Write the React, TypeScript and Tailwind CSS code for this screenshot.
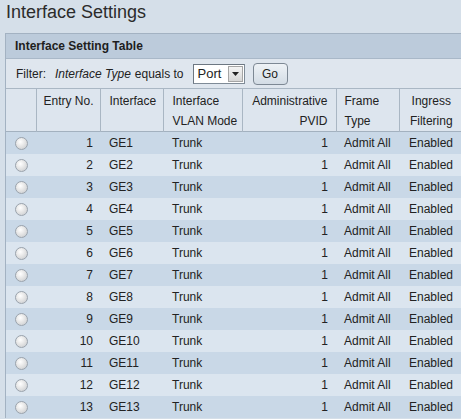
import React from "react";

const rows = Array.from({ length: 13 }, (_, i) => i + 1);

function Radio() {
  return (
    <span className="inline-block w-[13px] h-[13px] rounded-full border border-[#9aa3ad] bg-[radial-gradient(circle_at_40%_35%,#ffffff_0%,#e6e6e6_45%,#c4c7cb_100%)] align-middle" />
  );
}

const th =
  "align-top font-normal whitespace-nowrap border-r border-r-[#a9b6c3] border-l border-l-[#f3f6f9] pt-[2px] pb-0";

export default function App() {
  return (
    <div className="w-[461px] h-[419px] overflow-hidden bg-[#d5dfe9] text-[#222] font-['Liberation_Sans',Arial,sans-serif] text-[12px]">
      <div className="h-[33px] pl-[6px] pt-[1px] text-[18px] leading-[22px] text-[#2b2b2b]">
        Interface Settings
      </div>
      <div className="ml-[5px] w-[470px] border-l border-t border-[#a3b2c2] bg-[#dbe4ed]">
        <div className="h-[25px] flex items-center pl-[9px] bg-[#bccbdb] border-b border-[#a9b8c8] font-bold text-[12px] text-[#1e1e1e]">
          Interface Setting Table
        </div>
        <div className="h-[30px] flex items-center pl-[10px] bg-[#dfe6ee] border-b border-[#aab7c4] whitespace-nowrap">
          <span>Filter:</span>
          <span className="ml-[9px] italic">Interface Type</span>
          <span className="ml-[4px]">equals to</span>
          <div className="ml-[9px] w-[52px] h-[20px] flex items-center bg-white border border-[#7f8b97] border-t-[#6d7782] border-l-[#6d7782]">
            <span className="pl-[4px] flex-1 text-[13px] leading-[18px]">Port</span>
            <span className="w-[15px] h-[16px] mr-[1px] flex items-center justify-center bg-[linear-gradient(#f4f4f4,#d6d6d6)] border border-[#a5a5a5]">
              <svg width="7" height="4" viewBox="0 0 7 4">
                <path d="M0 0h7L3.5 4z" fill="#222" />
              </svg>
            </span>
          </div>
          <button className="ml-[8px] w-[35px] h-[22px] rounded-[4px] border border-[#7d8894] bg-[linear-gradient(#eef2f6,#d3dce5)] text-[12px] text-[#222] leading-[18px]">
            Go
          </button>
        </div>
        <table className="border-collapse table-fixed w-[457px]">
          <colgroup>
            <col className="w-[30px]" />
            <col className="w-[64px]" />
            <col className="w-[63px]" />
            <col className="w-[79px]" />
            <col className="w-[94px]" />
            <col className="w-[63px]" />
            <col className="w-[64px]" />
          </colgroup>
          <thead>
            <tr className="h-[42px] bg-[#dde5ee] border-b border-[#a3b1bf] leading-[20px] text-[12px]">
              <th className={th + " border-l-0 px-0"}></th>
              <th className={th + " text-right pr-[6px] pl-0"}>Entry No.</th>
              <th className={th + " text-left pl-[9px] pr-0"}>Interface</th>
              <th className={th + " text-left pl-[9px] pr-0"}>
                Interface
                <br />
                VLAN Mode
              </th>
              <th className={th + " text-right pr-[8px] pl-0"}>
                Administrative
                <br />
                PVID
              </th>
              <th className={th + " text-left pl-[8px] pr-0"}>
                Frame
                <br />
                Type
              </th>
              <th className={th + " text-center px-0 border-r-0"}>
                Ingress
                <br />
                Filtering
              </th>
            </tr>
          </thead>
          <tbody>
            {rows.map((n) => (
              <tr
                key={n}
                className={
                  "h-[22px] leading-[22px] whitespace-nowrap " +
                  (n % 2 === 1 ? "bg-[#c9d8e7]" : "bg-[#dbe5ef]")
                }
              >
                <td className="text-center p-0">
                  <Radio />
                </td>
                <td className="text-right pr-[7px] pl-0">{n}</td>
                <td className="pl-[9px] pr-0">GE{n}</td>
                <td className="pl-[9px] pr-0">Trunk</td>
                <td className="text-right pr-[8px] pl-0">1</td>
                <td className="pl-[8px] pr-0">Admit All</td>
                <td className="text-center px-0">Enabled</td>
              </tr>
            ))}
          </tbody>
        </table>
      </div>
    </div>
  );
}
